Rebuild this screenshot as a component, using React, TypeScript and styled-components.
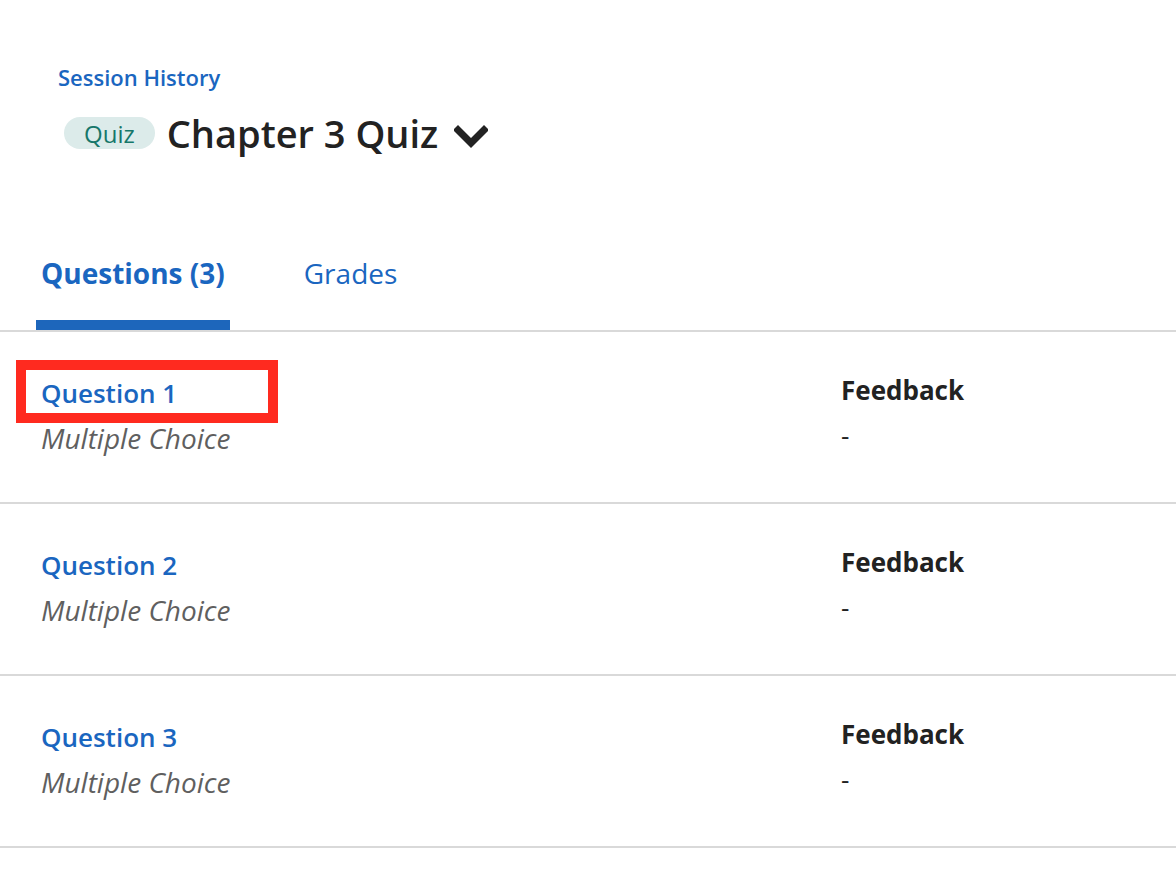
import React from 'react';
import styled, { createGlobalStyle } from 'styled-components';

const GlobalStyle = createGlobalStyle`
  body {
    margin: 0;
    background: #ffffff;
    font-family: "Open Sans", "Noto Sans", sans-serif;
    color: #222222;
  }
`;

const Page = styled.div`
  width: 1176px;
  min-height: 890px;
  background: #ffffff;
`;

const Header = styled.header`
  padding: 62px 0 0 58px;
`;

const Breadcrumb = styled.a`
  display: block;
  font-size: 22px;
  line-height: 30px;
  font-weight: 600;
  color: #1a66c0;
  text-decoration: none;
`;

const TitleRow = styled.div`
  display: flex;
  align-items: center;
  margin-top: 17px;
  padding-left: 6px;
`;

const TypePill = styled.span`
  display: inline-flex;
  align-items: center;
  height: 32px;
  padding: 0 20px;
  border-radius: 16px;
  background: #dcebea;
  color: #16776a;
  font-size: 24px;
  margin-right: 12px;
`;

const Title = styled.h1`
  margin: 0;
  font-size: 38px;
  line-height: 48px;
  font-weight: 600;
  color: #222222;
`;

const ChevronButton = styled.button`
  display: flex;
  align-items: center;
  border: 0;
  background: none;
  padding: 0;
  margin: 8px 0 0 16px;
  color: #222222;
  cursor: pointer;
`;

const Tabs = styled.nav`
  display: flex;
  gap: 69px;
  margin-top: 97px;
  padding-left: 36px;
  border-bottom: 2px solid #d9d9d9;
`;

const Tab = styled.button<{ $active?: boolean }>`
  border: 0;
  background: none;
  padding: 0 5px 28px;
  font-family: inherit;
  font-size: 28px;
  line-height: 38px;
  font-weight: ${p => (p.$active ? 700 : 400)};
  color: #1a66c0;
  border-bottom: 10px solid ${p => (p.$active ? '#1d66bb' : 'transparent')};
  cursor: pointer;
`;

const QuestionList = styled.div``;

const QuestionRow = styled.div`
  display: grid;
  grid-template-columns: 800px 1fr;
  height: 172px;
  padding: 43px 0 0 41px;
  box-sizing: border-box;
  border-bottom: 2px solid #d9d9d9;
`;

const QuestionInfo = styled.div`
  display: flex;
  flex-direction: column;
  align-items: flex-start;
`;

const QuestionLink = styled.a<{ $highlighted?: boolean }>`
  position: relative;
  font-size: 26px;
  line-height: 36px;
  font-weight: 600;
  color: #1a66c0;
  text-decoration: none;

  ${p =>
    p.$highlighted &&
    `
    &::after {
      content: '';
      position: absolute;
      left: -25px;
      top: -15px;
      width: 262px;
      height: 63px;
      box-sizing: border-box;
      border: 10px solid #ff2a1f;
    }
  `}
`;

const QuestionType = styled.span`
  margin-top: 9px;
  font-size: 28px;
  line-height: 36px;
  font-style: italic;
  color: #5f5f5f;
`;

const Feedback = styled.div`
  display: flex;
  flex-direction: column;
  margin-top: -3px;
`;

const FeedbackLabel = styled.span`
  font-size: 26px;
  line-height: 36px;
  font-weight: 700;
  color: #222222;
`;

const FeedbackValue = styled.span`
  margin-top: 9px;
  font-size: 26px;
  line-height: 36px;
  color: #222222;
`;

const questions = [
  { id: 1, type: 'Multiple Choice', feedback: '-' },
  { id: 2, type: 'Multiple Choice', feedback: '-' },
  { id: 3, type: 'Multiple Choice', feedback: '-' },
];

const App: React.FC = () => {
  return (
    <Page>
      <GlobalStyle />
      <Header>
        <Breadcrumb href="#">Session History</Breadcrumb>
        <TitleRow>
          <TypePill>Quiz</TypePill>
          <Title>Chapter 3 Quiz</Title>
          <ChevronButton aria-label="Switch quiz">
            <svg width="34" height="24" viewBox="0 0 34 24" fill="none">
              <polyline
                points="4,5 17,18 30,5"
                stroke="currentColor"
                strokeWidth="7"
                strokeLinejoin="miter"
                strokeLinecap="square"
              />
            </svg>
          </ChevronButton>
        </TitleRow>
      </Header>

      <Tabs>
        <Tab $active>Questions (3)</Tab>
        <Tab>Grades</Tab>
      </Tabs>

      <QuestionList>
        {questions.map(q => (
          <QuestionRow key={q.id}>
            <QuestionInfo>
              <QuestionLink href="#" $highlighted={q.id === 1}>
                Question {q.id}
              </QuestionLink>
              <QuestionType>{q.type}</QuestionType>
            </QuestionInfo>
            <Feedback>
              <FeedbackLabel>Feedback</FeedbackLabel>
              <FeedbackValue>{q.feedback}</FeedbackValue>
            </Feedback>
          </QuestionRow>
        ))}
      </QuestionList>
    </Page>
  );
};

export default App;
